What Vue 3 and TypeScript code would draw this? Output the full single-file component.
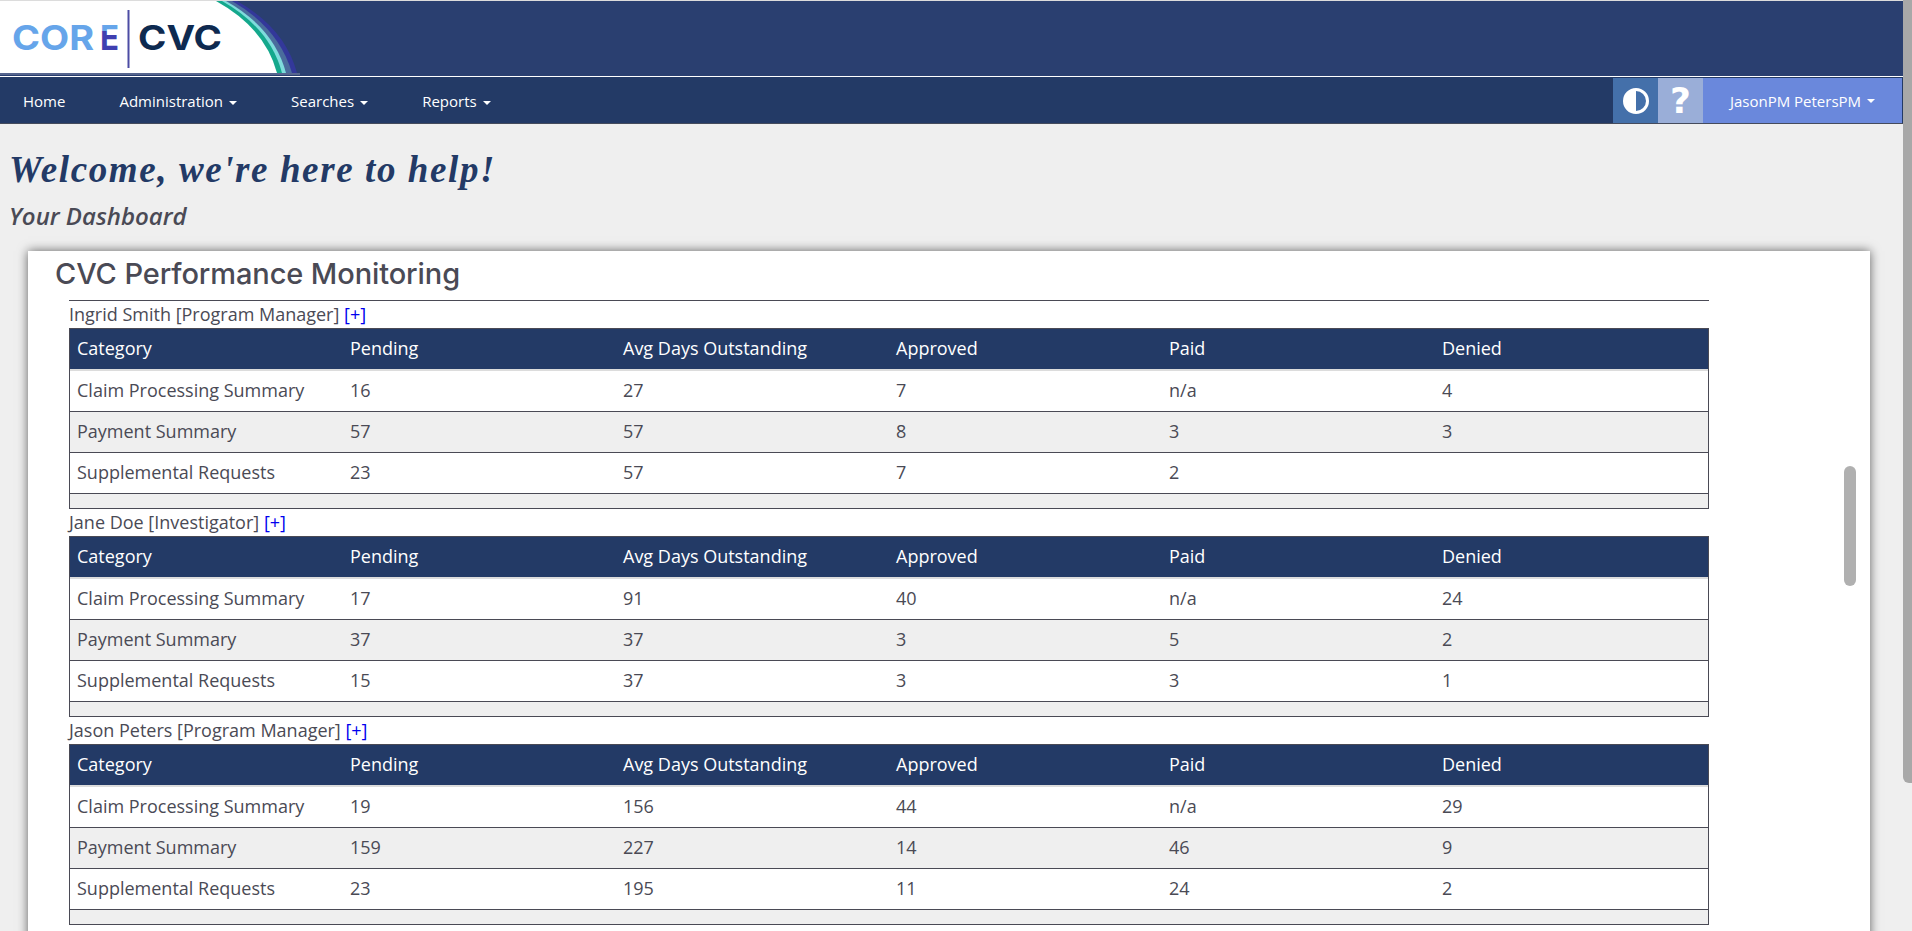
<script setup lang="ts">
interface Row { cells: (string | number)[] }
interface Person { name: string; rows: Row[] }

const headers: string[] = ['Category', 'Pending', 'Avg Days Outstanding', 'Approved', 'Paid', 'Denied']

const people: Person[] = [
  {
    name: 'Ingrid Smith [Program Manager]',
    rows: [
      { cells: ['Claim Processing Summary', 16, 27, 7, 'n/a', 4] },
      { cells: ['Payment Summary', 57, 57, 8, 3, 3] },
      { cells: ['Supplemental Requests', 23, 57, 7, 2, ''] },
    ],
  },
  {
    name: 'Jane Doe [Investigator]',
    rows: [
      { cells: ['Claim Processing Summary', 17, 91, 40, 'n/a', 24] },
      { cells: ['Payment Summary', 37, 37, 3, 5, 2] },
      { cells: ['Supplemental Requests', 15, 37, 3, 3, 1] },
    ],
  },
  {
    name: 'Jason Peters [Program Manager]',
    rows: [
      { cells: ['Claim Processing Summary', 19, 156, 44, 'n/a', 29] },
      { cells: ['Payment Summary', 159, 227, 14, 46, 9] },
      { cells: ['Supplemental Requests', 23, 195, 11, 24, 2] },
    ],
  },
]

const menu: { label: string; caret: boolean }[] = [
  { label: 'Home', caret: false },
  { label: 'Administration', caret: true },
  { label: 'Searches', caret: true },
  { label: 'Reports', caret: true },
]
</script>

<template>
  <div class="page">
    <header class="banner">
      <svg class="logo" width="300" height="75" viewBox="0 0 300 75">
        <defs>
          <linearGradient id="eFill" gradientUnits="userSpaceOnUse" x1="0" y1="0" x2="0" y2="75">
            <stop offset="0.405" stop-color="#66a5ea" />
            <stop offset="0.405" stop-color="#3f3fb0" />
          </linearGradient>
        </defs>
        <path d="M0 0H237Q285 27 297 72H0Z" fill="#33389a" />
        <path d="M0 0H232Q279 27 292 72H0Z" fill="#4a6c9c" />
        <path d="M0 0H226Q274 27 286 72H0Z" fill="#7fdcdc" />
        <path d="M0 0H222Q270 27 282 72H0Z" fill="#14a88c" />
        <path d="M0 0H216Q265 27 277 72H0Z" fill="#ffffff" />
        <rect x="0" y="72" width="300" height="2" fill="#56658e" />
        <text x="12" y="49" class="mark" fill="#66a5ea" textLength="82" lengthAdjust="spacingAndGlyphs">COR</text>
        <text x="100" y="49" class="mark" fill="url(#eFill)" textLength="19" lengthAdjust="spacingAndGlyphs">E</text>
        <rect x="127.500" y="9" width="2" height="58" fill="#4c4ca4" />
        <text x="138" y="49" class="mark" fill="#0e2a50" textLength="84" lengthAdjust="spacingAndGlyphs">CVC</text>
      </svg>
    </header>

    <nav class="nav">
      <ul class="menu">
        <li v-for="item in menu" :key="item.label" class="menu-item">
          {{ item.label }}<span v-if="item.caret" class="caret"></span>
        </li>
      </ul>
      <div class="tools">
        <div class="tool tool-contrast">
          <svg width="26" height="26" viewBox="0 0 26 26">
            <circle cx="13" cy="13" r="11.500" fill="none" stroke="#fff" stroke-width="3" />
            <path d="M13 1.500A11.500 11.500 0 0 0 13 24.500Z" fill="#fff" />
          </svg>
        </div>
        <div class="tool tool-help">?</div>
        <div class="tool tool-user">JasonPM PetersPM<span class="caret"></span></div>
      </div>
    </nav>

    <main class="content">
      <h1 class="welcome">Welcome, we're here to help!</h1>
      <h2 class="sub">Your Dashboard</h2>

      <section class="card">
        <h3 class="card-title">CVC Performance Monitoring</h3>
        <div class="rule"></div>
        <div v-for="person in people" :key="person.name" class="person">
          <div class="person-name">{{ person.name }} <a class="expand">[+]</a></div>
          <table class="grid">
            <thead>
              <tr>
                <th v-for="h in headers" :key="h">{{ h }}</th>
              </tr>
            </thead>
            <tbody>
              <tr v-for="row in person.rows" :key="String(row.cells[0])">
                <td v-for="(c, i) in row.cells" :key="i">{{ c }}</td>
              </tr>
            </tbody>
            <tfoot>
              <tr><td colspan="6"></td></tr>
            </tfoot>
          </table>
        </div>
        <div class="inner-thumb"></div>
      </section>
    </main>

    <div class="page-thumb"></div>
  </div>
</template>

<style>
html, body { margin: 0; height: 100%; overflow: hidden; background: #efefef; }
</style>

<style scoped>
.page {
  position: relative;
  height: 931px;
  overflow: hidden;
  background: #efefef;
  font-family: "Open Sans", sans-serif;
  color: #4a4a55;
  font-size: 18px;
}
.banner {
  height: 75px;
  border-top: 1px solid #dcdcdc;
  background: #2a3f70;
  border-bottom: 1px solid #ffffff;
  box-sizing: content-box;
}
.logo { display: block; }
.mark {
  font-family: Inter, sans-serif;
  font-size: 34px;
  font-weight: 700;
}
.nav {
  display: flex;
  justify-content: space-between;
  height: 46px;
  background: #233a66;
  border-bottom: 1px solid #454b5c;
  padding-right: 10px;
}
.menu {
  display: flex;
  align-items: center;
  gap: 54px;
  margin: 0;
  padding: 2px 0 0 23px;
  list-style: none;
}
.menu-item {
  font-size: 15px;
  color: #fff;
}
.caret {
  display: inline-block;
  margin-left: 6px;
  vertical-align: middle;
  border-top: 4px solid #fff;
  border-left: 4px solid transparent;
  border-right: 4px solid transparent;
}
.tools { display: flex; margin-top: 1px; }
.tool {
  display: flex;
  align-items: center;
  justify-content: center;
  color: #fff;
}
.tool-contrast { width: 45px; background: #4470aa; }
.tool-help {
  width: 45px;
  background: #9aaed8;
  font-family: "DejaVu Sans", sans-serif;
  font-weight: 700;
  font-size: 36px;
}
.tool-user { width: 199px; background: #6a88dc; font-size: 15px; padding-top: 1px; box-sizing: border-box; }
.content { padding: 0; }
.welcome {
  margin: 0;
  padding: 24px 0 0 9px;
  height: 50px;
  font-family: "Liberation Serif", serif;
  font-style: italic;
  font-weight: 700;
  font-size: 37px;
  line-height: 44px;
  color: #233a66;
  letter-spacing: 1.6px;
}
.sub {
  margin: 0;
  padding: 0 0 0 9px;
  height: 53px;
  font-size: 24px;
  font-style: italic;
  font-weight: 600;
  line-height: 36px;
  color: #4a4a55;
}
.card {
  position: relative;
  width: 1842px;
  height: 800px;
  margin-left: 28px;
  background: #fff;
  box-shadow: 0 0 10px rgba(0, 0, 0, 0.6);
}
.card-title {
  margin: 0;
  padding-left: 27px;
  height: 49px;
  font-family: Inter, sans-serif;
  font-size: 29px;
  font-weight: 500;
  line-height: 46px;
  letter-spacing: -0.1px;
  color: #4a4a55;
}
.rule {
  width: 1640px;
  margin-left: 41px;
  border-top: 1px solid #4a4a55;
}
.person { margin-left: 41px; width: 1640px; }
.person-name {
  height: 27px;
  line-height: 26px;
}
.expand { color: #0000ee; }
.grid {
  width: 1640px;
  table-layout: fixed;
  border-collapse: separate;
  border-spacing: 0;
  border: 1px solid #4a4a55;
}
.grid th {
  box-sizing: border-box;
  height: 42px;
  padding: 0 0 3px 7px;
  background: #233a66;
  color: #fff;
  font-weight: 400;
  text-align: left;
  border-bottom: 2px solid #dcdcdc;
}
.grid td {
  box-sizing: border-box;
  height: 41px;
  padding: 0 0 2px 7px;
  border-bottom: 1px solid #4a4a55;
}
.grid tbody tr:nth-child(even) td { background: #efefef; }
.grid tfoot td {
  height: 14px;
  padding: 0;
  background: #efefef;
  border-bottom: 0;
}
.inner-thumb {
  position: absolute;
  left: 1816px;
  top: 215px;
  width: 12px;
  height: 120px;
  border-radius: 6px;
  background: #b0b0b0;
}
.page-thumb {
  position: absolute;
  left: 1903px;
  top: 0;
  width: 9px;
  height: 783px;
  border-bottom-left-radius: 6px;
  background: #a8a8a8;
}
</style>
